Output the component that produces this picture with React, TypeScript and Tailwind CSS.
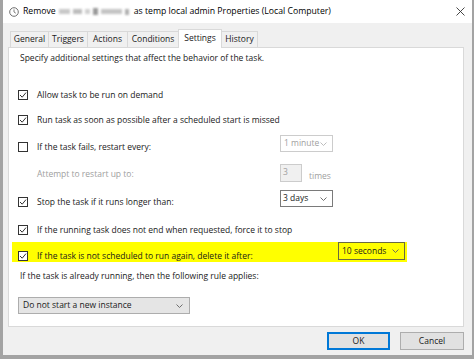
import React from "react";

const Check: React.FC<{ checked?: boolean }> = ({ checked }) => (
  <svg width="10" height="10" viewBox="0 0 10 10" className="shrink-0">
    <rect x="0.5" y="0.5" width="9" height="9" fill="white" stroke="#333" strokeWidth="1" />
    {checked && <polyline points="2,5 4.2,7.2 8,2.6" fill="none" stroke="#333" strokeWidth="1" />}
  </svg>
);

const Chevron: React.FC<{ color?: string }> = ({ color = "#606060" }) => (
  <svg width="7" height="4" viewBox="0 0 7 4" className="shrink-0">
    <polyline points="0.5,0.5 3.5,3.5 6.5,0.5" fill="none" stroke={color} strokeWidth="0.9" />
  </svg>
);

const Row: React.FC<{ checked?: boolean; label: string }> = ({ checked, label }) => (
  <div className="flex items-center gap-[9px] h-[14px]">
    <Check checked={checked} />
    <span>{label}</span>
  </div>
);

const tabs = [
  { name: "General", w: "w-[39px]" },
  { name: "Triggers", w: "w-[40px]" },
  { name: "Actions", w: "w-[41px]" },
  { name: "Conditions", w: "w-[52px]" },
  { name: "Settings", w: "w-[44px]", active: true },
  { name: "History", w: "w-[37px]" },
];

export default function App() {
  return (
    <div className="w-[474px] h-[359px] flex flex-col bg-[#f0f0f0] border-l-[3px] border-r-[2px] border-b-[4px] border-[#a3a3a3] overflow-hidden text-[#1a1a1a] leading-none font-['Open_Sans',sans-serif] text-[8.5px]">
      {/* Title bar */}
      <div className="h-[23px] bg-white flex items-center pl-[6px] pr-[7px] shrink-0 text-[8.7px] text-black">
        <svg width="10" height="10" viewBox="0 0 10 10" className="shrink-0">
          <circle cx="5" cy="5" r="4.3" fill="none" stroke="#707070" strokeWidth="1" />
          <polyline points="5,2.4 5,5 6.8,6.2" fill="none" stroke="#707070" strokeWidth="0.9" />
        </svg>
        <span className="ml-[4px]">Remove</span>
        {/* redacted name */}
        <div className="ml-[3px] w-[70px] h-[8px] flex items-center gap-[3px] blur-[1.2px] shrink-0">
          <div className="w-[12px] h-[5px] bg-[#c8c8c8]" />
          <div className="w-[9px] h-[5px] bg-[#bdbdbd]" />
          <div className="w-[6px] h-[5px] bg-[#d0d0d0]" />
          <div className="w-[5px] h-[7px] bg-[#9a9a9a]" />
          <div className="w-[22px] h-[5px] bg-[#c4c4c4]" />
          <div className="w-[4px] h-[6px] bg-[#b0b0b0]" />
        </div>
        <span className="ml-[5px]">as temp local admin Properties (Local Computer)</span>
        <svg width="9" height="9" viewBox="0 0 9 9" className="ml-auto shrink-0">
          <path d="M0.5 0.5 L8.5 8.5 M8.5 0.5 L0.5 8.5" stroke="#333" strokeWidth="0.9" />
        </svg>
      </div>

      {/* Body */}
      <div className="flex-1 flex flex-col pl-[5px] pr-[8px]">
        <div className="mt-[6px] h-[18px] flex items-end pl-[2px] shrink-0">
          {tabs.map((t, i) => (
            <div
              key={t.name}
              className={
                t.active
                  ? `${t.w} h-[19px] -mb-px relative z-10 bg-white border border-b-0 border-[#d9d9d9] flex items-center justify-center pb-[2px] ${i ? "-ml-px" : ""}`
                  : `${t.w} h-[16px] bg-[#f0f0f0] border border-b-0 border-[#d9d9d9] flex items-center justify-center ${i ? "-ml-px" : ""}`
              }
            >
              {t.name}
            </div>
          ))}
        </div>

        {/* Panel */}
        <div className="h-[280px] bg-white border border-[#d9d9d9] flex flex-col shrink-0">
          <div className="mt-[3px] h-[14px] flex items-center pl-[11px]">
            Specify additional settings that affect the behavior of the task.
          </div>

          <div className="pl-[9px] flex flex-col">
            <div className="mt-[23px]">
              <Row checked label="Allow task to be run on demand" />
            </div>
            <div className="mt-[11px]">
              <Row checked label="Run task as soon as possible after a scheduled start is missed" />
            </div>

            <div className="mt-[8px] flex items-start">
              <div className="w-[262px] mt-[5px]">
                <Row label="If the task fails, restart every:" />
              </div>
              <div className="w-[53px] h-[17px] border border-[#cccccc] bg-white flex items-center justify-between pl-[3px] pr-[5px] text-[#a0a0a0]">
                <span>1 minute</span>
                <Chevron color="#b5b5b5" />
              </div>
            </div>

            <div className="mt-[10px] flex items-start">
              <div className="w-[262px] mt-[3px] pl-[19px] h-[14px] flex items-center text-[#a0a0a0]">
                Attempt to restart up to:
              </div>
              <div className="w-[22px] h-[18px] border border-[#cccccc] bg-[#f0f0f0] flex items-start pt-[3px] pl-[2px] text-[#a0a0a0]">
                3
              </div>
              <span className="ml-[7px] mt-[8px] text-[#a0a0a0]">times</span>
            </div>

            <div className="mt-[8px] flex items-start">
              <div className="w-[262px] mt-[5px]">
                <Row checked label="Stop the task if it runs longer than:" />
              </div>
              <div className="w-[53px] h-[17px] border border-[#7a7a7a] bg-white flex items-center justify-between pl-[2px] pr-[5px]">
                <span>3 days</span>
                <Chevron />
              </div>
            </div>

            <div className="mt-[14px]">
              <Row checked label="If the running task does not end when requested, force it to stop" />
            </div>
          </div>

          <div className="mt-[5px] ml-[3px] w-[395px] h-[20px] bg-[#ffff00] flex items-start pl-[6px]">
            <div className="w-[320px] mt-[7px]">
              <Row checked label="If the task is not scheduled to run again, delete it after:" />
            </div>
            <div className="w-[67px] h-[18px] border border-[#6a6a40] flex items-center justify-between pl-[3px] pr-[5px]">
              <span>10 seconds</span>
              <Chevron />
            </div>
          </div>

          <div className="mt-[7px] h-[14px] flex items-center pl-[11px]">
            If the task is already running, then the following rule applies:
          </div>

          <div className="mt-[14px] ml-[9px] w-[172px] h-[17px] border border-[#adadad] bg-[#e5e5e5] flex items-center justify-between pl-[4px] pr-[6px]">
            <span>Do not start a new instance</span>
            <Chevron />
          </div>
        </div>

        {/* Buttons */}
        <div className="mt-[5px] flex justify-end gap-[10px] shrink-0">
          <button className="w-[63px] h-[18px] bg-[#e1e1e1] border-2 border-[#0078d7] flex items-center justify-center">
            OK
          </button>
          <button className="w-[64px] h-[18px] bg-[#e1e1e1] border border-[#adadad] flex items-center justify-center">
            Cancel
          </button>
        </div>
      </div>
    </div>
  );
}
